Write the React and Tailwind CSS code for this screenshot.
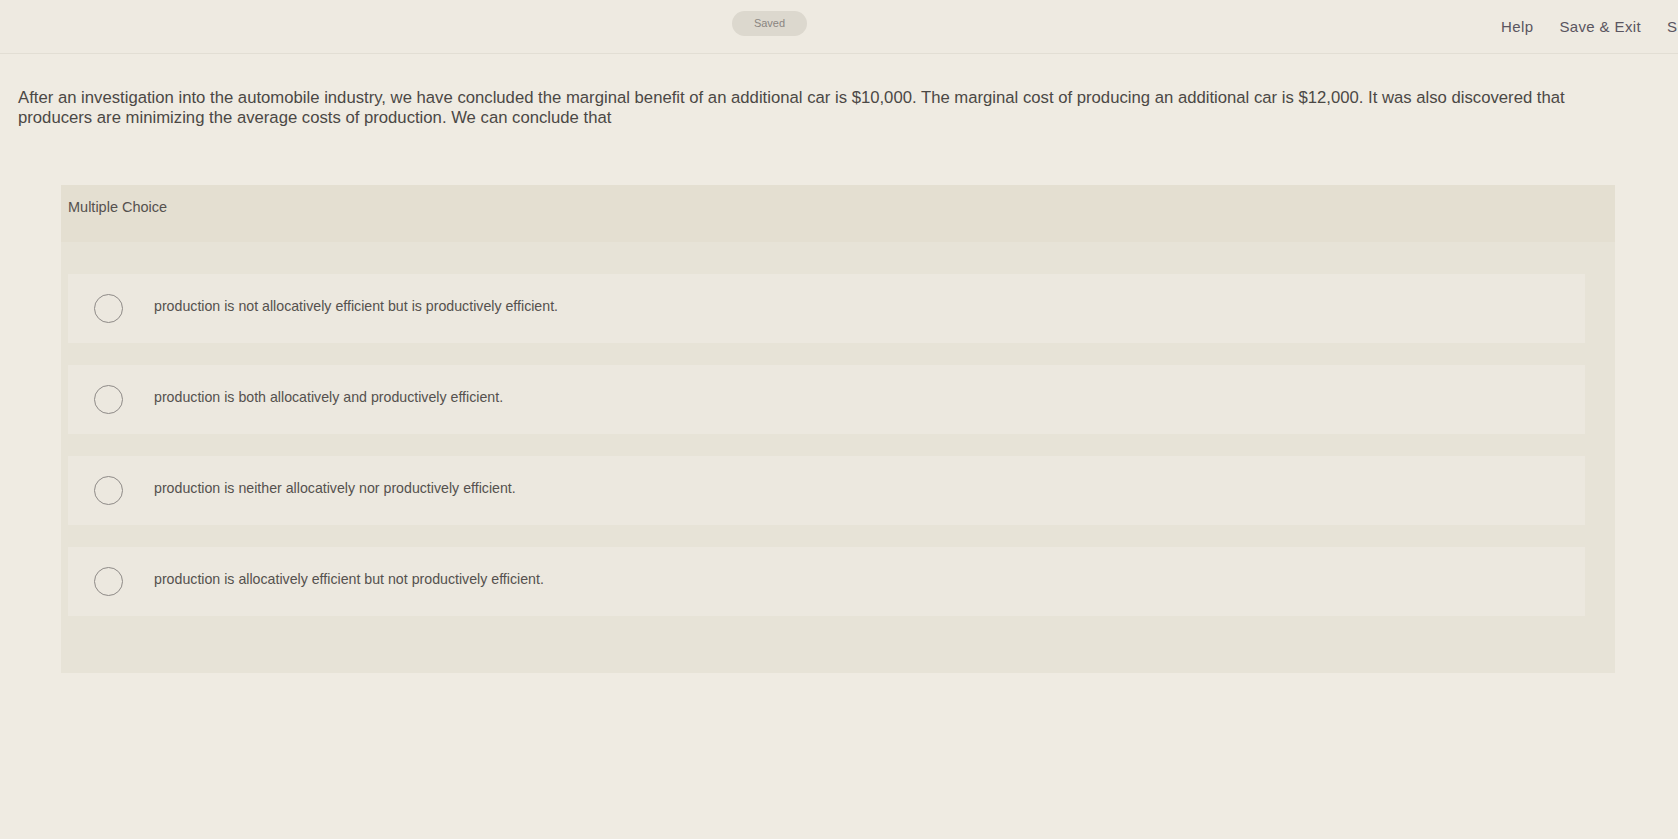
const options = [
  "production is not allocatively efficient but is productively efficient.",
  "production is both allocatively and productively efficient.",
  "production is neither allocatively nor productively efficient.",
  "production is allocatively efficient but not productively efficient.",
];

const Choice = ({ label }) => {
  return (
    <label className="flex items-center h-[69px] ml-[7px] mr-[30px] bg-[#ece8df] cursor-pointer">
      <span className="ml-[26px] w-[29px] h-[29px] rounded-full border-[1.5px] border-[#8e8a87] shrink-0"></span>
      <span className="ml-[31px] mb-[4px] text-[14.2px] text-[#55514e]">{label}</span>
    </label>
  );
};

const App = () => {
  return (
    <div
      className="w-[1678px] h-[839px] overflow-hidden bg-[#efebe2] text-[#4b4845]"
      style={{ fontFamily: '"Liberation Sans", Arial, sans-serif' }}
    >
      <header className="flex items-center h-[54px] border-b border-[#e2ded4] bg-[#eeeae1] whitespace-nowrap">
        <span className="ml-[732px] mb-[6px] w-[75px] h-[25px] flex items-center justify-center rounded-full bg-[#dcd8ce] text-[11px] text-[#8a8581]">
          Saved
        </span>
        <nav className="ml-auto mt-[2px] flex items-center gap-[26px] mr-[-38px] text-[15px] font-medium tracking-wide text-[#5a5560]">
          <a href="#">Help</a>
          <a href="#">Save &amp; Exit</a>
          <a href="#">Submit</a>
        </nav>
      </header>

      <main>
        <p className="mt-[34px] ml-[18px] w-[1590px] text-[16.7px] leading-[20px]">
          After an investigation into the automobile industry, we have concluded
          the marginal benefit of an additional car is $10,000. The marginal
          cost of producing an additional car is $12,000. It was also discovered
          that producers are minimizing the average costs of production. We can
          conclude that
        </p>

        <section className="mt-[57px] ml-[61px] w-[1554px] bg-[#e7e3d7] pb-[57px]">
          <div className="h-[57px] bg-[#e4dfd1] pt-[12px] pl-[7px] text-[14.5px] text-[#55514e]">
            Multiple Choice
          </div>
          <div className="mt-[32px] flex flex-col gap-[22px]">
            {options.map((o) => (
              <Choice key={o} label={o} />
            ))}
          </div>
        </section>
      </main>
    </div>
  );
};

export default App;
